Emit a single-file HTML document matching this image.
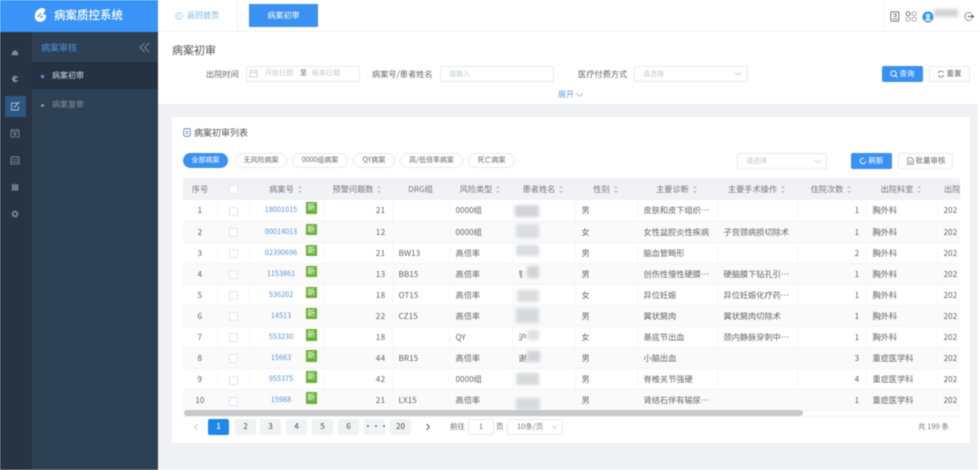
<!DOCTYPE html>
<html lang="zh"><head><meta charset="utf-8"><title>病案质控系统</title>
<style>
*{box-sizing:border-box}
html,body{margin:0;padding:0;width:980px;height:470px;overflow:hidden;background:#fff}
body{font-family:"Noto Sans CJK SC","Liberation Sans",sans-serif;font-size:8px;color:#5f6368;position:relative}
#p{position:absolute;left:0;top:0;width:980px;height:470px;overflow:hidden;filter:blur(.45px)}
.a{position:absolute;white-space:nowrap}
.box{position:absolute;background:#fff;border:1px solid #e8eaee;border-radius:2px;color:#c4c7cc;font-size:7px;line-height:14px;white-space:nowrap}
.btn{position:absolute;border-radius:2px;font-size:7.5px;line-height:15px;text-align:center;white-space:nowrap}
.pri{background:#3a91f2;color:#fff}
.def{background:#fff;border:1px solid #e8eaee;color:#666;line-height:14px}
.pill{position:absolute;top:153px;height:15px;border:1px solid #e8eaee;border-radius:8px;background:#fff;font-size:7px;line-height:13px;text-align:center;color:#666;white-space:nowrap}
.pg{position:absolute;top:419px;height:16px;width:21px;background:#f1f2f4;border-radius:2px;text-align:center;font-size:8px;line-height:16px;color:#666;font-weight:500}
table{border-collapse:collapse;table-layout:fixed;width:777px;position:absolute;left:0;top:0}
th{height:22px;background:#f0f2f5;font-weight:normal;font-size:8.2px;line-height:12px;color:#777;text-align:center;padding:0;white-space:nowrap;overflow:hidden}
td{height:21.1px;padding:0 6px;font-size:8.2px;line-height:12px;color:#666;border-bottom:1px solid #f3f4f6;border-right:1px solid #f6f7f8;white-space:nowrap;overflow:hidden}
tr:nth-child(even) td{background:#fafafb}
td.c{text-align:center;padding:0}
td.r{text-align:right;letter-spacing:.3px}
td.l{color:#5b93d6;text-align:center;padding:0 10px 0 0;position:relative;font-size:7.3px}
td.l b{position:absolute;right:6px;top:2px;width:10.5px;height:11.5px;background:#66b032;color:#fff;font-weight:normal;font-size:8px;line-height:11.5px;text-align:center}
.ck{display:inline-block;width:9px;height:9px;border:1px solid #e4e6ea;background:#fff;vertical-align:middle;border-radius:1px}
.s{display:inline-block;width:5px;height:7px;margin-left:4px;vertical-align:middle;position:relative}
.s:before,.s:after{content:"";position:absolute;left:0;border-left:2.5px solid transparent;border-right:2.5px solid transparent}
.s:before{top:0;border-bottom:2.5px solid #b9bdc4}
.s:after{bottom:0;border-top:2.5px solid #b9bdc4}
.blur{position:absolute;background:#d2d3d6;filter:blur(1.6px)}
.ic{position:absolute}
.dim{opacity:.8}
</style></head><body><div id="p">

<!-- main background -->
<div class="a" style="left:158px;top:32px;width:820px;height:438px;background:#f0f1f4"></div>
<!-- header -->
<div class="a" style="left:0;top:0;width:158px;height:32px;background:#3a94f7"></div>
<svg class="ic" style="left:33px;top:7px" width="16" height="16" viewBox="0 0 16 16"><path d="M9 1C4 2 1 6 2 11c.5 3 4 4.500 7 3.500 3-1 5-4 3.500-6.500-.8-1-2-1-3-.5l3-4.500C12 2 10.500.8 9 1z" fill="#fff"/><path d="M5 10l3-4M7 11l3-2" stroke="#3a94f7" stroke-width="1.200" fill="none"/></svg>
<div class="a" style="left:54px;top:6px;font-size:11.500px;line-height:18px;color:#fff;font-weight:500">病案质控系统</div>
<div class="a" style="left:158px;top:31px;width:822px;height:1px;background:#eef0f2"></div>
<div class="a" style="left:237px;top:0;width:1px;height:32px;background:#f3f4f6"></div>
<svg class="ic" style="left:175px;top:12px" width="8" height="8" viewBox="0 0 8 8"><circle cx="4" cy="4" r="3.300" fill="none" stroke="#a9c8ec" stroke-width=".8"/><path d="M4.500 2.500L3 4l1.500 1.500" fill="none" stroke="#a9c8ec" stroke-width=".8"/></svg>
<div class="a" style="left:187px;top:10px;font-size:8px;line-height:12px;color:#7aaee6">返回首页</div>
<div class="a" style="left:249px;top:4px;width:69px;height:23px;background:#3a91f2;color:#fff;font-size:8px;line-height:23px;text-align:center">病案初审</div>
<div class="a" style="left:884px;top:0;width:1px;height:32px;background:#f5f6f7"></div>
<svg class="ic" style="left:890px;top:11px" width="10" height="11" viewBox="0 0 10 11"><rect x=".8" y=".8" width="8" height="9.400" rx="1" fill="none" stroke="#666" stroke-width=".9"/><path d="M3 3h3v2.500H3.500M2.500 8h5" fill="none" stroke="#666" stroke-width=".8"/></svg>
<svg class="ic" style="left:905px;top:11px" width="12" height="11" viewBox="0 0 12 11"><circle cx="3" cy="2.800" r="2" fill="none" stroke="#666" stroke-width=".9"/><rect x="7" y="1" width="4" height="3.500" rx="1" fill="none" stroke="#999" stroke-width=".8"/><rect x="1" y="6.500" width="4" height="3.500" rx="1" fill="none" stroke="#999" stroke-width=".8"/><rect x="7" y="6.500" width="4" height="3.500" rx="1" fill="none" stroke="#999" stroke-width=".8"/></svg>
<svg class="ic" style="left:922px;top:11px" width="12" height="12" viewBox="0 0 12 12"><circle cx="6" cy="6" r="5.500" fill="#3a91e6"/><circle cx="6" cy="4.800" r="2.200" fill="#cfe4fa"/><path d="M2.500 10c.5-2 2-3 3.500-3s3 1 3.500 3z" fill="#cfe4fa"/></svg>
<div class="blur" style="left:934px;top:9px;width:24px;height:8px"></div>
<svg class="ic" style="left:963px;top:11px" width="11" height="11" viewBox="0 0 11 11"><path d="M8.500 2.500A4 4 0 1 0 8.500 8.500" fill="none" stroke="#777" stroke-width=".8"/><path d="M4.500 5.500h6M8.500 3.800l2 1.700-2 1.700" fill="none" stroke="#333" stroke-width=".8"/></svg>

<!-- sidebar -->
<div class="a" style="left:0;top:32px;width:32px;height:438px;background:#263443"></div>
<div class="a" style="left:32px;top:32px;width:126px;height:438px;background:#2e4054"></div>
<div class="a" style="left:32px;top:62px;width:126px;height:27px;background:#243242"></div>
<div class="a" style="left:41px;top:41px;font-size:9px;line-height:14px;color:#4a8fd8">病案审核</div>
<svg class="ic" style="left:139px;top:42px" width="11" height="11" viewBox="0 0 11 11"><path d="M5.500 1L1 5.500 5.500 10M10 1L5.500 5.500 10 10" fill="none" stroke="#7d8c9c" stroke-width=".9"/></svg>
<div class="a" style="left:41px;top:75px;width:3px;height:3px;background:#4f90dc"></div>
<div class="a" style="left:52px;top:70px;font-size:8px;line-height:12px;color:#d6dbe0">病案初审</div>
<div class="a" style="left:41px;top:104px;width:3px;height:3px;border-radius:50%;background:#8b97a3"></div>
<div class="a" style="left:52px;top:99px;font-size:8px;line-height:12px;color:#828f9c">病案复审</div>
<div class="a" style="left:5px;top:96px;width:21px;height:21px;background:#2f5680;border-radius:1px"></div>
<svg class="ic dim" style="left:11px;top:49px" width="8" height="7" viewBox="0 0 10 9"><path d="M1 8V5.500a2 2 0 0 1 1.500-2 2.600 2.600 0 0 1 5 0 2 2 0 0 1 1.500 2V8z" fill="#9aa5b0"/></svg>
<svg class="ic dim" style="left:11px;top:75px" width="8" height="8" viewBox="0 0 10 10"><path d="M9 3.500A4 4 0 1 0 9 6.500H5.500v-3z" fill="#9aa5b0"/></svg>
<svg class="ic" style="left:10px;top:101px" width="11" height="10" viewBox="0 0 11 10"><path d="M8 2H1.500v7H8.500V5.500" fill="none" stroke="#a3c4e8" stroke-width=".9"/><path d="M4 6.500L9.500 1" stroke="#a3c4e8" stroke-width="1.100"/></svg>
<svg class="ic dim" style="left:10px;top:128px" width="10" height="10" viewBox="0 0 10 10"><rect x="1" y="2" width="8" height="7" fill="none" stroke="#8a96a2" stroke-width=".9"/><path d="M1 4h8M3 .8v2M7 .8v2" stroke="#8a96a2" stroke-width=".8"/><rect x="3.500" y="5.300" width="3" height="2" fill="#8a96a2"/></svg>
<svg class="ic dim" style="left:10px;top:155px" width="10" height="10" viewBox="0 0 10 10"><rect x="1" y="2" width="8" height="7" fill="none" stroke="#8a96a2" stroke-width=".9"/><path d="M1 4.500h8M1 6.800h8M3 .8v2M7 .8v2" stroke="#8a96a2" stroke-width=".8"/></svg>
<svg class="ic dim" style="left:11px;top:183px" width="8" height="8" viewBox="0 0 10 10"><path d="M1 2l2.500-1v8L1 10zM3.800 1l2.400 1v8L3.800 9zM6.500 2L9 1v8L6.500 10z" fill="#8a96a2"/></svg>
<svg class="ic dim" style="left:11px;top:210px" width="8" height="8" viewBox="0 0 10 10"><circle cx="5" cy="5" r="2.700" fill="none" stroke="#9aa5b0" stroke-width="1.800"/><circle cx="5" cy="5" r="4.100" fill="none" stroke="#9aa5b0" stroke-width="1" stroke-dasharray="1.400 1.800"/></svg>

<!-- search panel -->
<div class="a" style="left:158px;top:32px;width:820px;height:72px;background:#fff"></div>
<div class="a" style="left:172px;top:41px;font-size:11px;line-height:18px;color:#555">病案初审</div>
<div class="a" style="left:206px;top:68px;font-size:8.200px;line-height:13px;color:#666">出院时间</div>
<div class="box" style="left:246px;top:66px;width:114px;height:16px"></div>
<svg class="ic" style="left:249px;top:69px" width="9" height="9" viewBox="0 0 9 9"><rect x="1" y="1.500" width="7" height="6.500" fill="none" stroke="#ccc" stroke-width=".8"/><path d="M1 3.500h7" stroke="#ccc" stroke-width=".8"/></svg>
<div class="a" style="left:265px;top:68px;font-size:7px;line-height:11px;color:#c4c7cc">开始日期</div>
<div class="a" style="left:300px;top:68px;font-size:7px;line-height:11px;color:#555">至</div>
<div class="a" style="left:312px;top:68px;font-size:7px;line-height:11px;color:#c4c7cc">结束日期</div>
<div class="a" style="left:372px;top:68px;font-size:8.200px;line-height:13px;color:#666">病案号/患者姓名</div>
<div class="box" style="left:440px;top:66px;width:114px;height:16px;padding-left:8px">请输入</div>
<div class="a" style="left:578px;top:68px;font-size:8.200px;line-height:13px;color:#666">医疗付费方式</div>
<div class="box" style="left:634px;top:66px;width:114px;height:16px;padding-left:8px">请选择</div>
<svg class="ic" style="left:734px;top:71px" width="8" height="5" viewBox="0 0 8 5"><path d="M1 1l3 3 3-3" fill="none" stroke="#ccc" stroke-width=".8"/></svg>
<div class="btn pri" style="left:882px;top:66px;width:41px;height:16px;padding-left:9px">查询</div>
<svg class="ic" style="left:890px;top:70px" width="8" height="8" viewBox="0 0 8 8"><circle cx="3.500" cy="3.500" r="2.700" fill="none" stroke="#fff" stroke-width=".9"/><path d="M5.500 5.500L7.500 7.500" stroke="#fff" stroke-width=".9"/></svg>
<div class="btn def" style="left:929px;top:66px;width:41px;height:16px;padding-left:9px">重置</div>
<svg class="ic" style="left:937px;top:70px" width="8" height="8" viewBox="0 0 8 8"><path d="M6.500 2.500A3 3 0 0 0 1.200 3M1.500 5.500A3 3 0 0 0 6.800 5" fill="none" stroke="#666" stroke-width=".8"/></svg>
<div class="a" style="left:558px;top:89px;font-size:8px;line-height:12px;color:#5f9fe6">展开</div>
<svg class="ic" style="left:575px;top:92px" width="9" height="6" viewBox="0 0 9 6"><path d="M1 1l3.500 3.500L8 1" fill="none" stroke="#8cb9ea" stroke-width=".8"/></svg>

<!-- card -->
<div class="a" style="left:172px;top:117px;width:798px;height:326px;background:#fff"></div>
<svg class="ic" style="left:183px;top:128px" width="8" height="9" viewBox="0 0 8 9"><rect x=".7" y=".7" width="6.600" height="7.600" rx="1.500" fill="none" stroke="#5d7ea3" stroke-width=".8"/><path d="M2.300 3.500h3.400M2.300 5.500h3.400" stroke="#5d7ea3" stroke-width=".7"/></svg>
<div class="a" style="left:194px;top:126px;font-size:9px;line-height:14px;color:#555">病案初审列表</div>
<div class="pill" style="left:183px;width:45px;background:#3a91f2;border-color:#3a91f2;color:#fff">全部病案</div>
<div class="pill" style="left:235px;width:52px">无风险病案</div>
<div class="pill" style="left:292px;width:56px">0000组病案</div>
<div class="pill" style="left:353px;width:42px">QY病案</div>
<div class="pill" style="left:400px;width:63px">高/低倍率病案</div>
<div class="pill" style="left:468px;width:47px">死亡病案</div>
<div class="box" style="left:737px;top:153px;width:90px;height:16px;padding-left:8px">请选择</div>
<svg class="ic" style="left:814px;top:159px" width="8" height="5" viewBox="0 0 8 5"><path d="M1 1l3 3 3-3" fill="none" stroke="#ccc" stroke-width=".8"/></svg>
<div class="btn pri" style="left:851px;top:153px;width:41px;height:16px;padding-left:9px">刷新</div>
<svg class="ic" style="left:859px;top:157px" width="8" height="8" viewBox="0 0 8 8"><circle cx="4" cy="4" r="2.800" fill="none" stroke="#fff" stroke-width=".9" stroke-dasharray="14 4"/></svg>
<div class="btn def" style="left:898px;top:153px;width:55px;height:16px;padding-left:10px">批量审核</div>
<svg class="ic" style="left:907px;top:157px" width="7" height="8" viewBox="0 0 7 8"><path d="M.7.7h3.800l1.800 1.800v4.800H.7z" fill="none" stroke="#666" stroke-width=".7"/><path d="M2 4h3M2 5.700h3" stroke="#666" stroke-width=".6"/></svg>

<!-- table -->
<div class="a" style="left:183px;top:178px;width:777px;height:233px;overflow:hidden">
<table>
<colgroup><col style="width:34px"><col style="width:32px"><col style="width:74px"><col style="width:69px"><col style="width:57px"><col style="width:63px"><col style="width:63px"><col style="width:62px"><col style="width:80px"><col style="width:80px"><col style="width:69px"><col style="width:71px"><col style="width:23px"></colgroup>
<thead><tr><th>序号</th><th><span class="ck"></span></th><th>病案号<span class="s"></span></th><th>预警问题数<span class="s"></span></th><th>DRG组</th><th>风险类型<span class="s"></span></th><th>患者姓名<span class="s"></span></th><th>性别<span class="s"></span></th><th>主要诊断<span class="s"></span></th><th>主要手术操作<span class="s"></span></th><th>住院次数<span class="s"></span></th><th>出院科室<span class="s"></span></th><th style="text-align:left;padding-left:7px">出院</th></tr></thead>
<tbody>
<tr><td class="c">1</td><td class="c"><span class="ck"></span></td><td class="l">18001015<b>新</b></td><td class="r">21</td><td></td><td>0000组</td><td></td><td>男</td><td>皮肤和皮下组织…</td><td></td><td class="r">1</td><td>胸外科</td><td>202</td></tr>
<tr><td class="c">2</td><td class="c"><span class="ck"></span></td><td class="l">00014013<b>新</b></td><td class="r">12</td><td></td><td>0000组</td><td></td><td>女</td><td>女性盆腔炎性疾病</td><td>子宫颈病损切除术</td><td class="r">1</td><td>胸外科</td><td>202</td></tr>
<tr><td class="c">3</td><td class="c"><span class="ck"></span></td><td class="l">02390696<b>新</b></td><td class="r">21</td><td>BW13</td><td>高倍率</td><td></td><td>男</td><td>脑血管畸形</td><td></td><td class="r">2</td><td>胸外科</td><td>202</td></tr>
<tr><td class="c">4</td><td class="c"><span class="ck"></span></td><td class="l">1153861<b>新</b></td><td class="r">13</td><td>BB15</td><td>高倍率</td><td>钅</td><td>男</td><td>创伤性慢性硬膜…</td><td>硬脑膜下钻孔引…</td><td class="r">1</td><td>胸外科</td><td>202</td></tr>
<tr><td class="c">5</td><td class="c"><span class="ck"></span></td><td class="l">536202<b>新</b></td><td class="r">18</td><td>OT15</td><td>高倍率</td><td></td><td>女</td><td>异位妊娠</td><td>异位妊娠化疗药…</td><td class="r">1</td><td>胸外科</td><td>202</td></tr>
<tr><td class="c">6</td><td class="c"><span class="ck"></span></td><td class="l">14513<b>新</b></td><td class="r">22</td><td>CZ15</td><td>高倍率</td><td></td><td>男</td><td>翼状胬肉</td><td>翼状胬肉切除术</td><td class="r">1</td><td>胸外科</td><td>202</td></tr>
<tr><td class="c">7</td><td class="c"><span class="ck"></span></td><td class="l">553230<b>新</b></td><td class="r">18</td><td></td><td>QY</td><td>沪</td><td>女</td><td>基底节出血</td><td>颈内静脉穿刺中…</td><td class="r">1</td><td>胸外科</td><td>202</td></tr>
<tr><td class="c">8</td><td class="c"><span class="ck"></span></td><td class="l">15663<b>新</b></td><td class="r">44</td><td>BR15</td><td>高倍率</td><td>谢</td><td>男</td><td>小脑出血</td><td></td><td class="r">3</td><td>重症医学科</td><td>202</td></tr>
<tr><td class="c">9</td><td class="c"><span class="ck"></span></td><td class="l">955375<b>新</b></td><td class="r">42</td><td></td><td>0000组</td><td></td><td>男</td><td>脊椎关节强硬</td><td></td><td class="r">4</td><td>重症医学科</td><td>202</td></tr>
<tr><td class="c">10</td><td class="c"><span class="ck"></span></td><td class="l">15988<b>新</b></td><td class="r">21</td><td>LX15</td><td>高倍率</td><td></td><td>男</td><td>肾结石伴有输尿…</td><td></td><td class="r">1</td><td>重症医学科</td><td>202</td></tr>
</tbody></table>
</div>
<!-- redacted names -->
<div class="blur" style="left:515px;top:205px;width:24px;height:12px"></div>
<div class="blur" style="left:516px;top:224px;width:23px;height:14px;background:#dcdde0"></div>
<div class="blur" style="left:516px;top:245px;width:23px;height:11px;background:#dcdde0"></div>
<div class="blur" style="left:527px;top:266px;width:12px;height:12px"></div>
<div class="blur" style="left:517px;top:290px;width:22px;height:12px;background:#dcdde0"></div>
<div class="blur" style="left:516px;top:308px;width:23px;height:15px;background:#d8d9dc"></div>
<div class="blur" style="left:527px;top:330px;width:12px;height:10px;background:#e0e1e4"></div>
<div class="blur" style="left:527px;top:351px;width:13px;height:11px"></div>
<div class="blur" style="left:516px;top:373px;width:23px;height:12px;background:#d8d9dc"></div>
<div class="blur" style="left:516px;top:398px;width:24px;height:12px;background:#d8d9dc"></div>
<!-- scrollbar -->
<div class="a" style="left:184px;top:410px;width:619px;height:6px;border-radius:3px;background:#c6c8cb"></div>
<div class="a" style="left:183px;top:416px;width:777px;height:1px;background:#f0f1f3"></div>

<!-- pagination -->
<svg class="ic" style="left:193px;top:423px" width="6" height="8" viewBox="0 0 6 8"><path d="M4.500 1L1.500 4l3 3" fill="none" stroke="#bbb" stroke-width=".8"/></svg>
<div class="pg" style="left:208px;background:#1f87e8;color:#fff">1</div>
<div class="pg" style="left:235px">2</div>
<div class="pg" style="left:260px">3</div>
<div class="pg" style="left:286px">4</div>
<div class="pg" style="left:312px">5</div>
<div class="pg" style="left:338px">6</div>
<div class="pg" style="left:364px">···</div>
<div class="pg" style="left:390px">20</div>
<svg class="ic" style="left:425px;top:423px" width="6" height="8" viewBox="0 0 6 8"><path d="M1.500 1l3 3-3 3" fill="none" stroke="#555" stroke-width=".9"/></svg>
<div class="a" style="left:450px;top:421px;font-size:7.500px;line-height:12px;color:#666">前往</div>
<div class="box" style="left:468px;top:419px;width:26px;height:16px;text-align:center;color:#666">1</div>
<div class="a" style="left:496px;top:421px;font-size:7.500px;line-height:12px;color:#666">页</div>
<div class="box" style="left:507px;top:419px;width:56px;height:16px;padding-left:9px;color:#777;font-size:7.500px">10条/页</div>
<svg class="ic" style="left:551px;top:425px" width="7" height="5" viewBox="0 0 7 5"><path d="M1 1l2.500 2.500L6 1" fill="none" stroke="#ccc" stroke-width=".8"/></svg>
<div class="a" style="left:918px;top:421px;font-size:7.500px;line-height:12px;color:#777">共 199 条</div>

</div></body></html>
